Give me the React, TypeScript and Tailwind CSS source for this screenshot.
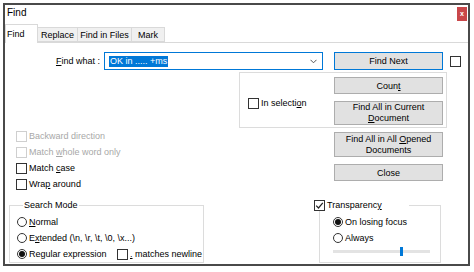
import React from "react"

const Box = ({ checked = false, disabled = false }: any) => (
  <span className={`flex h-[11px] w-[11px] shrink-0 items-center justify-center border bg-white ${disabled ? "border-[#cfcfcf]" : "border-[#333333]"}`}>
    {checked && (
      <svg width="9" height="9" viewBox="0 0 9 9">
        <path d="M1.2 4.6 L3.5 7 L7.8 1.8" fill="none" stroke="#222" strokeWidth="1.2" />
      </svg>
    )}
  </span>
)

const Radio = ({ on = false }: any) => (
  <span className="flex h-[10px] w-[10px] shrink-0 items-center justify-center rounded-full border border-[#333333] bg-white">
    {on && <span className="h-[6px] w-[6px] rounded-full bg-[#111111]" />}
  </span>
)

const Check = ({ label, disabled = false }: any) => (
  <div className={`flex h-[16px] items-center gap-[2px] ${disabled ? "text-[#a8a8a8]" : ""}`}>
    <Box disabled={disabled} /> <span>{label}</span>
  </div>
)

const Option = ({ label, on = false }: any) => (
  <div className="flex h-[16px] items-center gap-[2px]">
    <Radio on={on} /> <span>{label}</span>
  </div>
)

export default function App() {
  return (
    <div className="min-h-screen bg-white p-[3px] font-['Liberation_Sans',Arial,sans-serif] text-[9px] leading-[12px] text-black">
      <div className="flex h-[263px] w-[467px] flex-col border-2 border-[#4a4a4a] bg-white">
        {/* title bar */}
        <div className="flex h-[19px] shrink-0 items-start justify-between">
          <span className="ml-[2px] mt-[2px] text-[10px]">Find</span>
          <span className="mr-[1px] mt-[2px] flex h-[14px] w-[10px] items-center justify-center bg-[#c9474a] text-[7px] font-bold text-white">x</span>
        </div>

        {/* tabs */}
        <div className="flex h-[18px] shrink-0 items-end">
          <div className="relative z-10 -mb-px flex h-[19px] w-[33px] items-center border-x border-t border-[#d9d9d9] bg-white pl-[1px]">Find</div>
          <div className="flex h-[15px] w-[40px] items-center justify-center border-y border-r border-[#d9d9d9] bg-[#f0f0f0]">Replace</div>
          <div className="flex h-[15px] w-[54px] items-center justify-center border-y border-r border-[#d9d9d9] bg-[#f0f0f0]">Find in Files</div>
          <div className="flex h-[15px] w-[33px] items-center justify-center border-y border-r border-[#d9d9d9] bg-[#f0f0f0]">Mark</div>
        </div>

        {/* tab page */}
        <div className="flex flex-1 flex-col border-t border-[#d9d9d9]">
          <div className="flex">
            <div className="flex w-[329px] shrink-0 flex-col items-start">
              <div className="mt-[9px] flex h-[18px] items-center">
                <span className="w-[97px] pr-[2px] text-right"><u>F</u>ind what :</span>
                <div className="ml-[2px] flex h-[18px] w-[219px] items-center justify-between border border-[#0078d7] bg-white pl-[4px] pr-[5px]">
                  <span className="bg-[#0078d7] px-[1px] leading-[11px] text-white">OK in ..... +ms</span>
                  <svg width="7" height="5" viewBox="0 0 7 5">
                    <path d="M0.5 0.8 L3.5 3.8 L6.5 0.8" fill="none" stroke="#555" strokeWidth="1" />
                  </svg>
                </div>
              </div>

              <div className="ml-[234px] mt-[2px] flex h-[56px] w-[208px] shrink-0 items-center gap-[2px] border border-[#dcdcdc] pl-[8px] pt-[6px]">
                <Box /> <span>In selecti<u>o</u>n</span>
              </div>

              <div className="flex flex-col pl-[11px]">
                <Check label="Backward direction" disabled />
                <Check label={<>Match <u>w</u>hole word only</>} disabled />
                <Check label={<>Match <u>c</u>ase</>} />
                <Check label={<>Wra<u>p</u> around</>} />
              </div>
            </div>

            <div className="relative z-10 flex w-[109px] shrink-0 flex-col">
              <div className="mt-[9px] flex h-[18px] items-center justify-center border border-[#0078d7] bg-[#e1e1e1]">Find Next</div>
              <div className="mt-[7px] flex h-[17px] items-center justify-center border border-[#adadad] bg-[#e1e1e1]">Coun<u>t</u></div>
              <div className="mt-[7px] flex h-[24px] flex-col items-center justify-center border border-[#adadad] bg-[#e1e1e1] leading-[11px]">
                <span>Find All in Current</span>
                <span><u>D</u>ocument</span>
              </div>
              <div className="mt-[7px] flex h-[25px] flex-col items-center justify-center border border-[#adadad] bg-[#e1e1e1] leading-[11px]">
                <span>Find All in All <u>O</u>pened</span>
                <span>Documents</span>
              </div>
              <div className="mt-[7px] flex h-[17px] items-center justify-center border border-[#adadad] bg-[#e1e1e1]">Close</div>
            </div>

            <div className="ml-[7px] mt-[13px]">
              <Box />
            </div>
          </div>

          {/* bottom groups */}
          <div className="mt-[7px] flex items-start">
            <fieldset className="ml-[4px] w-[195px] border border-[#dcdcdc] pl-[7px]">
              <legend className="ml-[6px] px-[1px]">Search Mode</legend>
              <div className="mt-[3px] flex flex-col">
                <Option label={<><u>N</u>ormal</>} />
                <Option label={<>E<u>x</u>tended (\n, \r, \t, \0, \x...)</>} />
                <div className="flex h-[16px] items-center">
                  <div className="flex w-[100px] items-center gap-[2px]">
                    <Radio on /> <span>Regular expression</span>
                  </div>
                  <Box />
                  <span className="ml-[2px]"><u>.</u> matches newline</span>
                </div>
              </div>
            </fieldset>

            <fieldset className="ml-[115px] w-[122px] border border-[#dcdcdc] pb-[6px] pl-[13px]">
              <legend className="-ml-[19px] w-[95px]">
                <span className="flex items-center gap-[2px]">
                  <Box checked /> <span>Transparenc<u>y</u></span>
                </span>
              </legend>
              <div className="mt-[3px] flex flex-col">
                <Option label="On losing focus" on />
                <Option label="Always" />
                <div className="flex h-[10px] items-center">
                  <div className="relative h-[3px] w-[97px] bg-[#e3e3e3]">
                    <div className="absolute -top-[3px] left-[67px] h-[9px] w-[3px] bg-[#0078d7]" />
                  </div>
                </div>
              </div>
            </fieldset>
          </div>
        </div>
      </div>
    </div>
  )
}
